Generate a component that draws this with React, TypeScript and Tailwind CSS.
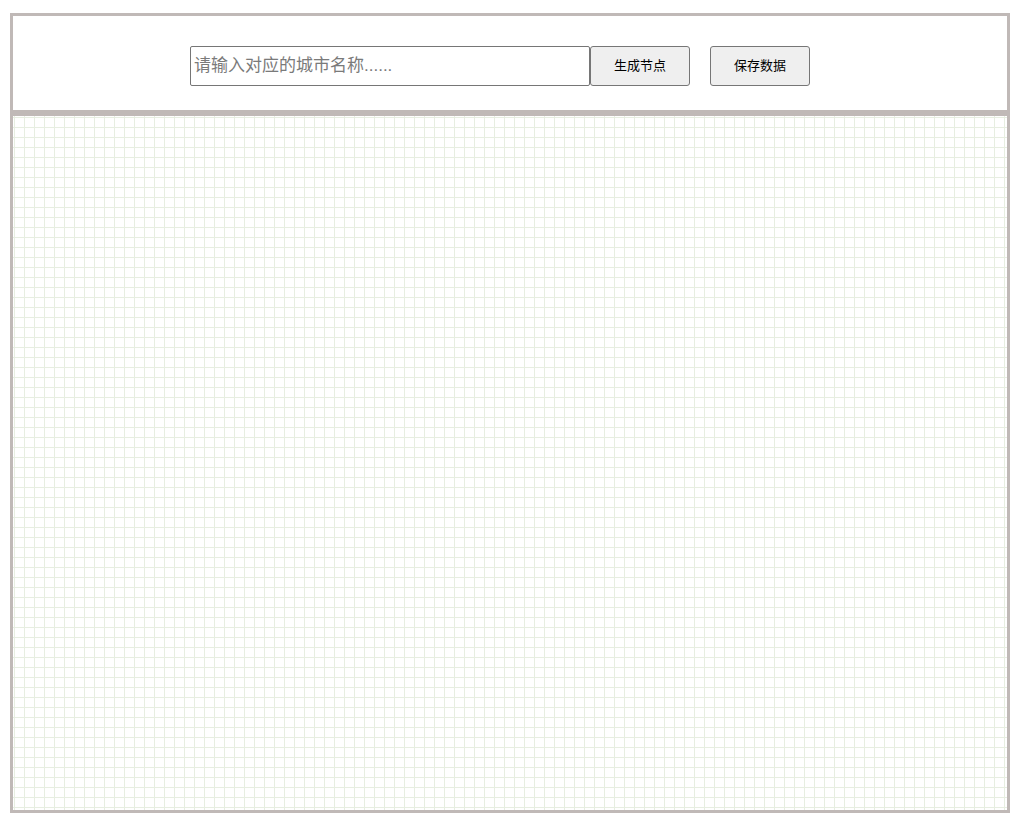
import React from "react";

export default function App() {
  return (
    <div
      className="w-[1034px] h-[824px] bg-white pt-[13px] pl-[10px]"
      style={{ fontFamily: '"Liberation Sans", "Noto Sans CJK SC", sans-serif' }}
    >
      <div className="w-[1000px] h-[800px] border-[3px] border-[#c0b9b7] flex flex-col">
        <div className="h-[97px] border-b-[3px] border-[#c0b9b7] pt-[30px] pl-[177px] flex items-start">
          <input
            type="text"
            placeholder="请输入对应的城市名称......"
            className="w-[400px] h-[40px] border border-[#767676] rounded-[2px] px-[3px] text-[17px] text-black placeholder:text-[#7a7a7a] outline-none"
          />
          <button className="w-[100px] h-[40px] border border-[#767676] rounded-[3px] bg-[#efefef] text-[13px] text-black">
            生成节点
          </button>
          <button className="ml-[20px] w-[100px] h-[40px] border border-[#767676] rounded-[3px] bg-[#efefef] text-[13px] text-black">
            保存数据
          </button>
        </div>
        <div className="flex-1 border-t-[3px] border-[#c0b9b7] bg-white bg-[linear-gradient(to_right,#e7eee1_1px,transparent_1px),linear-gradient(to_bottom,#e7eee1_1px,transparent_1px)] bg-[size:10px_10px] bg-[position:1px_1px]" />
      </div>
    </div>
  );
}
